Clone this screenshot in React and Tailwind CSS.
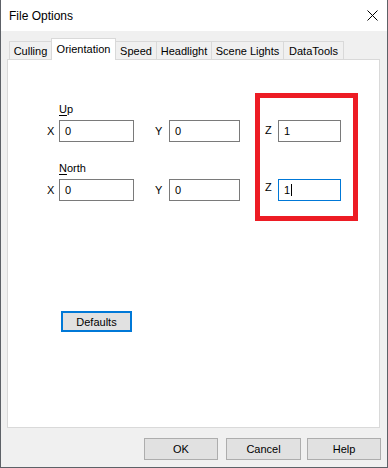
import React from 'react';

const tabs = [
  { label: 'Culling', w: 'w-[43px]' },
  { label: 'Orientation', w: 'w-[65px]', active: true },
  { label: 'Speed', w: 'w-[42px]' },
  { label: 'Headlight', w: 'w-[56px]' },
  { label: 'Scene Lights', w: 'w-[73px]' },
  { label: 'DataTools', w: 'w-[61px]' },
];

function Field({ value, width, focused, caret }) {
  return (
    <div
      className={`${width} h-[22px] flex items-center pl-[5px] bg-white border ${
        focused ? 'border-[#0078d7]' : 'border-[#7a7a7a]'
      }`}
    >
      <span>{value}</span>
      {caret && <span className="ml-[1px] w-px h-[12px] bg-black" />}
    </div>
  );
}

function Row({ z, zFocused, zUp }) {
  return (
    <div className="flex items-center pl-[39px] mt-[4px]">
      <span className="w-[12px]">X</span>
      <Field value="0" width="w-[75px]" />
      <span className="ml-[21px] w-[14px]">Y</span>
      <Field value="0" width="w-[71px]" />
      <span className={`ml-[25px] w-[13px] ${zUp ? 'mb-[6px]' : 'mb-[2px]'}`}>Z</span>
      <Field value={z} width="w-[63px]" focused={zFocused} caret={zFocused} />
    </div>
  );
}

export default function App() {
  return (
    <div className="relative w-[388px] h-[468px] bg-[#f0f0f0] border-l border-r border-b border-[#5d6167] font-['Liberation_Sans',Arial,sans-serif] text-[11px] leading-[14px] text-black select-none">
      {/* title bar */}
      <div className="h-[31px] bg-white flex items-center justify-between pl-[8px] pr-[9px]">
        <span className="text-[12px]">File Options</span>
        <svg width="11" height="11" viewBox="0 0 11 11" className="mt-[-1px]">
          <path d="M0.5 0.5 L10.5 10.5 M10.5 0.5 L0.5 10.5" stroke="#000" strokeWidth="1" />
        </svg>
      </div>

      {/* tabs */}
      <div className="flex items-end h-[21px] mt-[7px] ml-[8px]">
        {tabs.map((t, i) => (
          <div
            key={t.label}
            className={`${t.w} flex items-center justify-center border-t border-l border-r border-[#d9d9d9] ${
              i > 0 ? '-ml-px' : ''
            } ${t.active ? 'h-[22px] mb-[-1px] bg-white relative z-10 pb-[2px]' : 'h-[18px] bg-[#f0f0f0]'}`}
          >
            {t.label}
          </div>
        ))}
      </div>

      {/* panel */}
      <div className="ml-[6px] w-[373px] h-[369px] bg-white border border-[#d9d9d9] pt-[42px]">
        <div className="pl-[51px]">
          <span className="underline underline-offset-[2px] decoration-[1px]">U</span>p
        </div>
        <Row z="1" />
        <div className="pl-[51px] mt-[19px]">
          <span className="underline underline-offset-[2px] decoration-[1px]">N</span>orth
        </div>
        <Row z="1" zFocused zUp />

        <button className="ml-[53px] mt-[110px] w-[71px] h-[21px] flex items-center justify-center bg-[#e1e1e1] border-2 border-[#0078d7]">
          Defaults
        </button>
      </div>

      {/* dialog buttons */}
      <div className="flex mt-[10px] ml-[143px]">
        <button className="w-[74px] h-[22px] bg-[#e1e1e1] border border-[#adadad] flex items-center justify-center">
          OK
        </button>
        <button className="ml-[8px] w-[75px] h-[22px] bg-[#e1e1e1] border border-[#adadad] flex items-center justify-center">
          Cancel
        </button>
        <button className="ml-[6px] w-[74px] h-[22px] bg-[#e1e1e1] border border-[#adadad] flex items-center justify-center">
          Help
        </button>
      </div>

      {/* red annotation box */}
      <div className="absolute left-[254px] top-[93px] w-[103px] h-[128px] border-[5px] border-[#ed1c24] pointer-events-none" />
    </div>
  );
}
